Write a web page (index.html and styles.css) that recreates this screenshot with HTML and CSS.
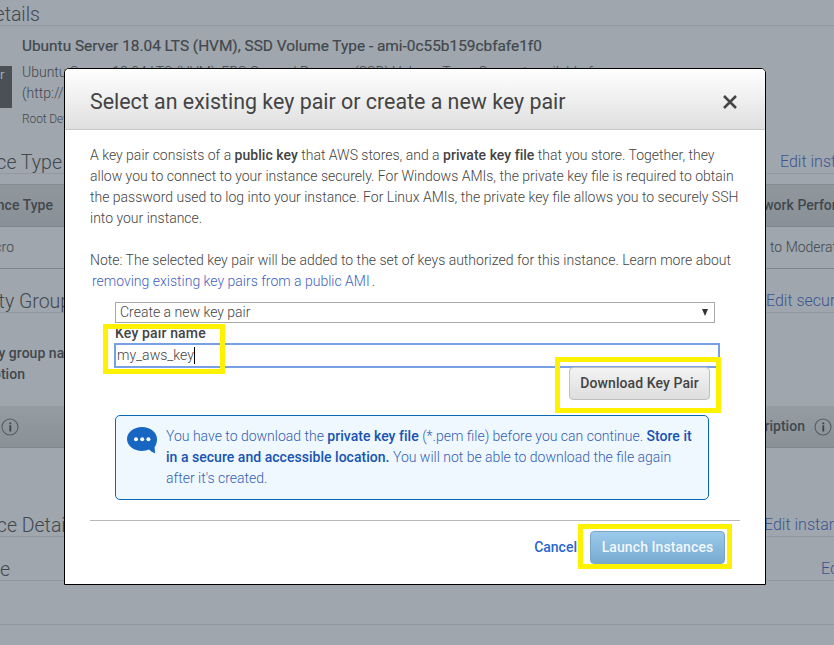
FILE: index.html
```html
<!DOCTYPE html>
<html lang="en">
<head>
    <meta charset="UTF-8">
    <meta name="viewport" content="width=device-width, initial-scale=1.0">
    <title>Launch instance wizard</title>
    <link rel="stylesheet" href="styles.css">
</head>
<body>
    <div class="page">
        <div class="section-head details"><h2><span>Details</span></h2></div>
        <div class="ami">
            <div class="ami-logo"><span>r</span></div>
            <div class="ami-text">
                <h3>Ubuntu Server 18.04 LTS (HVM), SSD Volume Type - ami-0c55b159cbfafe1f0</h3>
                <p>Ubuntu Server 18.04 LTS (HVM), EBS General Purpose (SSD) Volume Type. Support available from<br>(http://www</p>
                <p class="small">Root Device</p>
            </div>
        </div>

        <div class="section-head type"><h2><span>Instance Type</span></h2><a class="edit-type">Edit instance type</a></div>
        <div class="table-head">
            <b class="left th-type"><span>Instance Type</span></b>
            <b class="right th-network"><span>Network Performance</span></b>
        </div>
        <div class="table-row">
            <span class="left td-type"><span>t2.micro</span></span>
            <span class="right td-network">to Moderate</span>
        </div>

        <div class="section-head groups"><h2><span>Security Groups</span></h2><a class="edit-groups">Edit security groups</a></div>
        <div class="group-info">
            <b class="left group-name"><span>Security group name</span></b>
            <b class="left group-desc"><span>Description</span></b>
        </div>
        <div class="table-head rules">
            <svg class="info" viewBox="0 0 18 18"><circle cx="9" cy="9" r="8"/><path d="M9.300 7.300v6.200M9.300 4.500v1.700"/></svg>
            <b class="right th-desc">ription</b>
            <svg class="info info-right" viewBox="0 0 18 18"><circle cx="9" cy="9" r="8"/><path d="M9.300 7.300v6.200M9.300 4.500v1.700"/></svg>
        </div>

        <div class="section-head instance"><h2><span>Instance Details</span></h2><a class="edit-instance">Edit instance details</a></div>
        <div class="section-head storage"><h2><span>Storage</span></h2><a class="edit-storage">Edit storage</a></div>
        <div class="section-head empty"></div>
    </div>

    <div class="modal">
        <div class="modal-header">
            <h1>Select an existing key pair or create a new key pair</h1>
            <svg class="close" viewBox="0 0 14 14"><path d="M1 1l12 12M13 1l-12 12"/></svg>
        </div>
        <div class="modal-body">
            <p class="intro">A key pair consists of a <b>public key</b> that AWS stores, and a <b>private key file</b> that you store. Together, they<br>allow you to connect to your instance securely. For Windows AMIs, the private key file is required to obtain<br>the password used to log into your instance. For Linux AMIs, the private key file allows you to securely SSH<br>into your instance.</p>
            <p class="intro">Note: The selected key pair will be added to the set of keys authorized for this instance. Learn more about<br><a class="learn">removing existing key pairs from a public AMI</a>.</p>

            <div class="form">
                <div class="select"><span>Create a new key pair</span><i class="arrow"></i></div>
                <label>Key pair name</label>
                <div class="input"><span>my_aws_key</span><i class="caret"></i></div>
                <button class="download">Download Key Pair</button>
                <div class="note">
                    <svg class="bubble" viewBox="0 0 30 27">
                        <path class="shape" d="M15 0C6.800 0 0 5.300 0 12s6.800 12 15 12c2.600 0 5-.5 7-1.400 1.600 1.500 3.500 2.900 6.100 3.900l-.5-6.400C29.200 18 30 15.200 30 12 30 5.300 23.200 0 15 0z"/>
                        <circle cx="9" cy="12.200" r="2"/><circle cx="15.200" cy="12.200" r="2"/><circle cx="21.400" cy="12.200" r="2"/>
                    </svg>
                    <p>You have to download the <b>private key file</b> (*.pem file) before you can continue. <b>Store it<br>in a secure and accessible location.</b> You will not be able to download the file again<br>after it's created.</p>
                </div>
            </div>

            <div class="modal-footer">
                <a class="cancel">Cancel</a>
                <button class="launch">Launch Instances</button>
            </div>
        </div>
    </div>

    <div class="mark mark-name"></div>
    <div class="mark mark-download"></div>
    <div class="mark mark-launch"></div>
</body>
</html>
```
FILE: styles.css
```css
* {
    box-sizing: border-box;
}

body {
    margin: 0;
    width: 834px;
    height: 645px;
    overflow: hidden;
    position: relative;
    background-color: #9fa6ad;
    color: #444;
    font-family: Roboto, "Liberation Sans", sans-serif;
    font-size: 14px;
    font-weight: 300;
    line-height: 21px;
}

h1, h2, h3, p {
    margin: 0;
    font-weight: 300;
}

b {
    font-weight: 500;
    letter-spacing: 0.03px;
}

/* page behind the dialog */
.page {
    height: 645px;
    overflow: hidden;
    color: #42484d;
    white-space: nowrap;
}

.section-head {
    display: flex;
    align-items: flex-end;
    justify-content: space-between;
    border-bottom: 1px solid #9299a0;
}

.section-head h2, .left {
    display: flex;
    justify-content: flex-end;
}

.section-head h2 {
    font-size: 19.5px;
    line-height: 20px;
}

.section-head a {
    color: #3c5591;
    font-size: 16px;
    line-height: 22px;
}

.details { height: 26px; }
.details h2 { width: 40px; }

.ami {
    display: flex;
    height: 124px;
}

.ami-logo {
    width: 12px;
    height: 42px;
    margin-top: 40px;
    background-color: #4a5056;
    color: #a3aab0;
    text-align: right;
    padding-right: 8px;
    font-size: 13px;
    line-height: 18px;
    font-weight: 400;
}

.ami-text {
    margin-left: 10px;
    padding-top: 9px;
}

.ami-text h3 {
    font-size: 15.4px;
    font-weight: 400;
    line-height: 22px;
    margin-bottom: 5px;
    -webkit-text-stroke: 0.2px #42484d;
}

.ami-text .small {
    font-size: 12px;
    line-height: 20px;
    margin-top: 5px;
    letter-spacing: -0.1px;
}

.type { height: 24px; }
.type h2 { width: 62px; }
.edit-type { width: 54px; }

.table-head {
    display: flex;
    align-items: center;
    justify-content: space-between;
    height: 43px;
    margin-top: 10px;
    background: linear-gradient(#8f979d, #899097);
    border-top: 1px solid #848c92;
    border-bottom: 1px solid #7f878d;
}

.th-type { width: 53px; }
.right { overflow: hidden; }
.th-network { width: 69px; display: flex; }
.th-network span { margin-left: -24px; }

.table-row {
    display: flex;
    align-items: center;
    justify-content: space-between;
    height: 42px;
    border-bottom: 1px solid #7f878d;
}

.td-type { width: 14px; }
.td-network { width: 64px; }

.groups { height: 44px; }
.groups h2 { width: 81px; }
.edit-groups { width: 68px; }

.group-info {
    height: 83px;
    padding-top: 30px;
}

.group-name { width: 84px; }
.group-desc { width: 25px; }

.rules {
    height: 42px;
    background: linear-gradient(#959da3, #899197);
    border-top: 0;
    padding-left: 1px;
}

.info {
    width: 18px;
    height: 18px;
    flex-shrink: 0;
    fill: none;
    stroke: #565d62;
    stroke-width: 1.1;
}

.info path {
    stroke: #3e4449;
    stroke-width: 1.8;
}

.th-desc {
    margin-left: auto;
    margin-right: 9px;
}

.info-right { margin-right: 2px; }

.instance { height: 89px; }
.instance h2 { width: 80px; }
.edit-instance { width: 70px; }

.storage { height: 44px; }
.storage h2 { width: 10px; }
.edit-storage { width: 13px; }

.empty { height: 44px; }

/* dialog */
.modal {
    position: absolute;
    left: 64px;
    top: 68px;
    width: 702px;
    height: 517px;
    background-color: #fff;
    border: 1px solid #000;
    border-radius: 5px 5px 0 0;
    white-space: nowrap;
}

.modal-header {
    display: flex;
    align-items: center;
    justify-content: space-between;
    height: 61px;
    padding: 5px 28px 0 25px;
    background: linear-gradient(#fff, #dfdfdf);
    border-bottom: 1px solid #c6c6c6;
    border-radius: 4px 4px 0 0;
}

.modal-header h1 {
    font-size: 21.4px;
    font-weight: 400;
    line-height: 28px;
}

.close {
    width: 14px;
    height: 14px;
    fill: none;
    stroke: #444;
    stroke-width: 2.5;
}

.modal-body {
    padding: 15px 25px 0;
}

.intro {
    margin-bottom: 21px;
}

.learn {
    color: #3f5fc0;
    margin: 0 2px;
}

.form {
    margin: -11px 0 0 25px;
    width: 600px;
}

.select {
    display: flex;
    align-items: center;
    justify-content: space-between;
    height: 21px;
    padding: 0 6px 0 4px;
    border: 1px solid #a9a9a9;
}

.arrow {
    border: 3.5px solid transparent;
    border-top: 7px solid #333;
    border-bottom: 0;
}

.form label {
    display: block;
    font-weight: 500;
    letter-spacing: 0.15px;
    height: 20px;
}

.input {
    display: flex;
    align-items: center;
    width: 606px;
    height: 25px;
    margin-left: -1px;
    padding-left: 1px;
    border: 2px solid #78a0e4;
}

.caret {
    width: 1px;
    height: 17px;
    background-color: #000;
}

button {
    font-family: inherit;
    font-size: 14px;
    font-weight: 500;
    letter-spacing: 0.08px;
    padding: 0 0 2px;
    border-radius: 4px;
}

.download {
    display: block;
    position: relative;
    width: 141px;
    height: 33px;
    margin: -1px 0 15px 454px;
    color: #444;
    background: linear-gradient(#f3f3f3, #dedede);
    border: 1px solid #bfbfbf;
}

.note {
    display: flex;
    width: 594px;
    height: 85px;
    padding: 10px 0 0 11px;
    background-color: #f0f8ff;
    border: 1px solid #0768b5;
    border-radius: 5px;
    color: #3360b5;
}

.note b { color: #1753b2; }

.bubble {
    width: 30px;
    height: 27px;
    margin: 1px 9px 0 0;
    fill: #fff;
}

.bubble .shape { fill: #1766c2; }

.modal-footer {
    display: flex;
    justify-content: flex-end;
    align-items: center;
    margin-top: 20px;
    padding: 10px 15px 0 0;
    border-top: 1px solid #b8b8b8;
}

.cancel {
    color: #2a66d0;
    font-weight: 500;
    margin-right: 13px;
}

.launch {
    width: 135px;
    height: 33px;
    color: #f1f7fc;
    background: linear-gradient(#9bcaec, #78aad0);
    border: 1px solid #7ba6c6;
}

/* highlight frames */
.mark {
    position: absolute;
    border: 5px solid #fff200;
}

.mark-name {
    left: 103px;
    top: 324px;
    width: 122px;
    height: 50px;
}

.mark-download {
    left: 555px;
    top: 357px;
    width: 166px;
    height: 56px;
}

.mark-launch {
    left: 578px;
    top: 524px;
    width: 154px;
    height: 45px;
}
```
